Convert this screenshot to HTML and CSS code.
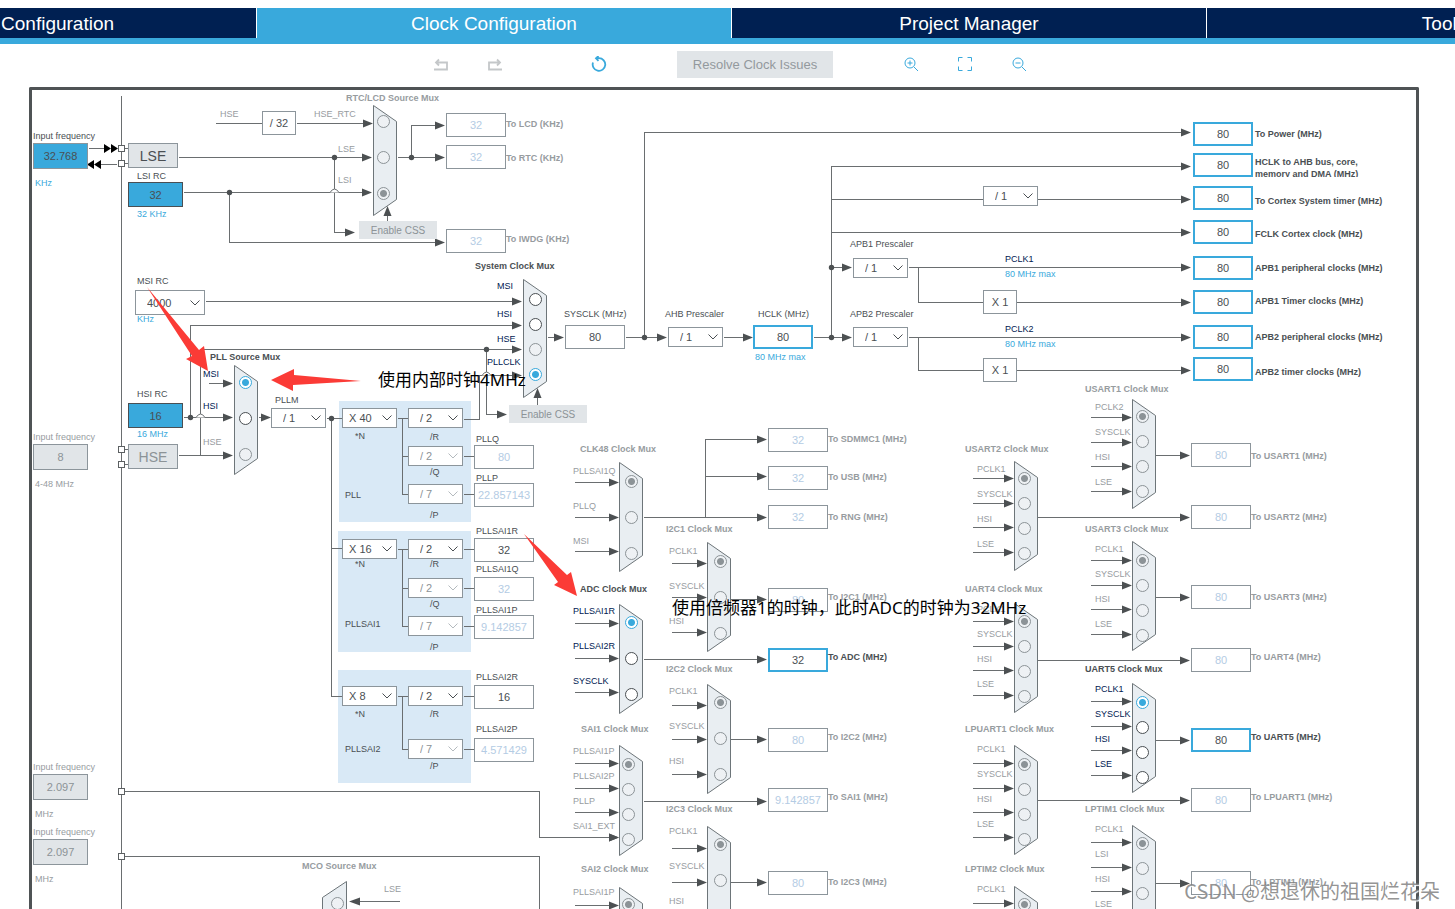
FILE: index.html
```html
<!DOCTYPE html>
<html lang="en">
<head>
  <meta charset="UTF-8">
  <meta name="viewport" content="width=device-width, initial-scale=1.0">
  <title>Clock Configuration</title>
  <link rel="stylesheet" href="styles.css">
</head>
<body>
  <nav class="tabs">
    <a href="#pinout" class="tab">Pinout &amp; Configuration</a>
    <a href="#clock" class="tab active">Clock Configuration</a>
    <a href="#project" class="tab">Project Manager</a>
    <a href="#tools" class="tab">Tools</a>
  </nav>

  <!-- Toolbar -->
  <div class="toolbar">
    <div class="group">
      <button class="icon off" aria-label="Undo">
        <svg viewBox="0 0 16 16"><path d="M1 13.500h13V6.500H3M6 3.500L3 6.500l3 3" stroke-width="1.8"/></svg>
      </button>
      <button class="icon off" aria-label="Redo">
        <svg viewBox="0 0 16 16"><path d="M15 13.500H2V6.500h11M10 3.500l3 3-3 3" stroke-width="1.8"/></svg>
      </button>
    </div>
    <button class="icon reset" aria-label="Reset">
      <svg viewBox="0 0 16 16"><path d="M2 6.500A6.300 6.300 0 1 0 8 2.200H5M7.500 0L5 2.200l2.500 2.600" stroke-width="1.8"/></svg>
    </button>
    <button class="resolve" disabled>Resolve Clock Issues</button>
    <div class="group">
      <button class="icon" aria-label="Zoom in">
        <svg viewBox="0 0 16 16"><circle cx="7" cy="7" r="5"/><path d="M11 11l4 4M4.500 7h5M7 4.500v5"/></svg>
      </button>
      <button class="icon" aria-label="Fit to window">
        <svg viewBox="0 0 16 16"><path d="M1.500 5.500v-4h4M10.500 1.500h4v4M14.500 10.500v4h-4M5.500 14.500h-4v-4"/></svg>
      </button>
      <button class="icon" aria-label="Zoom out">
        <svg viewBox="0 0 16 16"><circle cx="7" cy="7" r="5"/><path d="M11 11l4 4M4.500 7h5"/></svg>
      </button>
    </div>
  </div>

  <!-- Clock tree, filled by clock.js -->
  <main class="sheet">
    <div class="frame"></div>
    <svg class="wires"><g id="wires" transform="translate(0 -84)"></g></svg>
    <div id="nodes"></div>
    <svg class="marks">
      <g transform="translate(0 -84)">
        <path d="M147 287L199 350L204 346L208 371L186 359L192 356Z"/>
        <path d="M361 381L294 375L294 369L271 380L293 391L293 385Z"/>
        <path d="M524 534L567 575L571 572L577 596L554 585L558 582Z"/>
      </g>
    </svg>
    <p class="note note-pll">使用内部时钟4MHz</p>
    <p class="note note-adc">使用倍频器1的时钟，此时ADC的时钟为32MHz</p>
    <p class="watermark">CSDN @想退休的祖国烂花朵</p>
  </main>

  <script src="clock.js"></script>
</body>
</html>
```
FILE: styles.css
```css
* {
  box-sizing: border-box;
}
body {
  margin: 0;
  height: 100vh;
  display: flex;
  flex-direction: column;
  overflow: hidden;
  background: #fff;
  color: #4a4f53;
  font-family: "Liberation Sans", Arial, sans-serif;
}
button, input, select {
  font-family: inherit;
  margin: 0;
  padding: 0;
}

/* Tabs */
.tabs {
  display: flex;
  flex: none;
  gap: 1px;
  margin-top: 8px;
  overflow: hidden;
  border-bottom: 6px solid #39a9dc;
}
.tab {
  flex: 0 0 474px;
  height: 30px;
  line-height: 31px;
  text-align: center;
  font-size: 19px;
  color: #fff;
  background: #002052;
  text-decoration: none;
}
/* the first tab is scrolled half out of the window */
.tab:first-child {
  margin-left: -218px;
}
.tab.active {
  background: #39a9dc;
}

/* Toolbar */
.toolbar {
  display: flex;
  flex: none;
  justify-content: center;
  align-items: center;
  height: 40px;
  padding-left: 5px;
  gap: 70px;
}
.group {
  display: flex;
  gap: 38px;
}
.icon {
  width: 16px;
  height: 16px;
  border: none;
  background: none;
  color: #39a9dc;
}
.icon svg {
  display: block;
  width: 16px;
  height: 16px;
  fill: none;
  stroke: currentColor;
}
.icon.off {
  color: #c4c7c9;
}
.reset {
  margin-left: 18px;
}
.resolve {
  width: 156px;
  height: 27px;
  border: none;
  background: #e1e5e8;
  color: #93999d;
  font-size: 13px;
}

/* Clock tree */
.sheet {
  position: relative;
  flex: 1;
  overflow: hidden;
}
.frame {
  height: 100%;
  margin: 3px 36px 0 29px;
  border: 3px solid #4f5355;
  border-bottom: none;
  border-radius: 2px 2px 0 0;
}
.wires, .marks {
  position: absolute;
  left: 0;
  top: 0;
  width: 100%;
  height: 100%;
}
.wires .line {
  fill: none;
  stroke: #6a6e70;
  shape-rendering: crispEdges;
}
.wires .hop {
  fill: #fff;
  stroke: #6a6e70;
}
.wires .head, .wires .dot {
  fill: #4c5052;
}
.wires .ink {
  fill: #000;
}
.wires .body {
  fill: #e9eef2;
  stroke: #6d7579;
}
.wires .zone {
  fill: #d9e9f6;
}
.wires .pin {
  fill: #fff;
  stroke: #5c6062;
  shape-rendering: crispEdges;
}
.marks {
  pointer-events: none;
}
.marks path {
  fill: #fb3b36;
}

.node {
  position: absolute;
}
.label {
  font-size: 9px;
  line-height: 12px;
  white-space: nowrap;
}
.bold {
  font-weight: bold;
}
.off-text {
  color: #979c9f;
}
.blue {
  color: #39a9dc;
}
.navy {
  color: #002052;
}
.wrap {
  width: 130px;
  height: 21px;
  overflow: hidden;
  white-space: normal;
}

.value, .const, .osc {
  border: 1px solid #8c959b;
  border-radius: 0;
  background: #fff;
  color: #4a4f53;
  font-size: 11px;
  text-align: center;
}
.const, .osc {
  display: flex;
  align-items: center;
  justify-content: center;
}
.value.idle {
  color: #b4cce4;
}
.value.used {
  border: 2px solid #39a9dc;
}
.value.filled, .const.filled {
  background: #39a9dc;
}
.value.grey {
  background: #e1e5e8;
  color: #8c9397;
}
.osc {
  background: #e1e5e8;
  font-size: 14px;
}
.osc.grey {
  color: #8c9397;
}
.dark {
  border-color: #4a4f53;
}
.pick {
  appearance: none;
  border: 1px solid #8c959b;
  border-radius: 0;
  padding-left: 11px;
  color: #4a4f53;
  font-size: 11px;
  background: #fff url("data:image/svg+xml,%3Csvg xmlns='http://www.w3.org/2000/svg' width='10' height='6'%3E%3Cpath d='M.5 .5L5 5L9.500 .5' fill='none' stroke='%234a4f53'/%3E%3C/svg%3E") no-repeat right 4px center;
}
.pick.mult {
  padding-left: 6px;
}
.pick:disabled {
  opacity: 1;
  color: #8c9397;
  background-image: url("data:image/svg+xml,%3Csvg xmlns='http://www.w3.org/2000/svg' width='10' height='6'%3E%3Cpath d='M.5 .5L5 5L9.500 .5' fill='none' stroke='%23b4babe'/%3E%3C/svg%3E");
}
.css {
  border: none;
  background: #e1e5e8;
  color: #8c9397;
  font-size: 10px;
}
.radio {
  appearance: none;
  width: 13px;
  height: 13px;
  border: 1px solid #4a4f53;
  border-radius: 50%;
  background: #fff;
}
.radio:disabled {
  border-color: #8c9397;
  background: #eef1f4;
}
.radio:checked {
  border-color: #39a9dc;
  background: radial-gradient(circle, #39a9dc 3px, #fff 4px);
}
.radio:checked:disabled {
  border-color: #8c9397;
  background: radial-gradient(circle, #8c9397 3px, #eef1f4 4px);
}

/* Notes over the tree */
.note, .watermark {
  position: absolute;
  margin: 0;
  white-space: nowrap;
  font-family: "Noto Sans", "Noto Sans CJK SC", sans-serif;
}
.note {
  color: #000;
  font-size: 17px;
  line-height: 24px;
}
.note-pll {
  left: 378px;
  top: 284px;
}
.note-adc {
  left: 672px;
  top: 512px;
}
.watermark {
  right: 15px;
  bottom: 4px;
  font-family: "Noto Sans CJK SC", sans-serif;
  font-size: 20px;
  line-height: 28px;
  color: rgba(120, 120, 120, 0.8);
  text-shadow: 1px 1px 1px #fff;
}
```
FILE: clock.js
```js
// The sheet starts right below the tabs and the toolbar
const TOP = 84;
const SVG = 'http://www.w3.org/2000/svg';
const wires = document.getElementById('wires');
const nodes = document.getElementById('nodes');
let count = 0;

function shape(tag, cls, attrs) {
  const s = document.createElementNS(SVG, tag);
  s.setAttribute('class', cls);
  for (const k in attrs) s.setAttribute(k, attrs[k]);
  wires.appendChild(s);
}

function node(tag, cls, x, y, w, h) {
  const n = document.createElement(tag);
  n.className = 'node ' + cls;
  n.style.left = x + 'px';
  n.style.top = (y - TOP) + 'px';
  if (w) n.style.width = w + 'px';
  if (h) n.style.height = h + 'px';
  nodes.appendChild(n);
  return n;
}

// y is the middle of the text line
function label(text, x, y, cls, target) {
  const n = node(target ? 'label' : 'span', 'label ' + (cls || ''), x, y - 6);
  n.textContent = text;
  if (target) n.htmlFor = target.id;
  return n;
}

function value(text, x, y, cls, w, h) {
  const n = node('input', 'value ' + (cls || ''), x, y, w || 60, h || 24);
  n.type = 'text';
  n.value = text;
  n.readOnly = true;
  n.id = 'v' + (++count);
  return n;
}

function pick(text, x, y, cls, off, w, h) {
  const n = node('select', 'pick ' + (cls || ''), x, y, w || 55, h || 20);
  n.add(new Option(text));
  n.disabled = !!off;
  n.id = 'v' + (++count);
  return n;
}

function constant(text, x, y, w, h, cls) {
  node('div', cls || 'const', x, y, w, h).textContent = text;
}

// points: [x, y, x, y, ...]
function line(...p) {
  let d = '';
  for (let i = 0; i < p.length; i += 2) d += (i ? 'L' : 'M') + (p[i] + 0.5) + ' ' + (p[i + 1] + 0.5);
  shape('path', 'line', { d });
}

function head(x, y) {
  shape('path', 'head', { d: `M${x} ${y + 0.5}l-10 -4v8z` });
}

// a line that ends in an arrow head
function arrow(...p) {
  const y = p.pop();
  const x = p.pop();
  line(...p, x - 6, y);
  head(x, y);
}

function up(x, y, end) {
  line(x, y + 6, x, end);
  shape('path', 'head', { d: `M${x + 0.5} ${y}l-4 10h8z` });
}

function dot(x, y) {
  shape('circle', 'dot', { cx: x + 0.5, cy: y + 0.5, r: 2.7 });
}

function hop(x, y) {
  shape('path', 'hop', { d: `M${x - 4} ${y + 0.5}q4.500 -7 9 0` });
}

function pin(y) {
  shape('rect', 'pin', { x: 118.5, y: y - 2.5, width: 6, height: 6 });
}

function mux(m) {
  shape('path', 'body', { d: `M${m.x + 0.5} ${m.top + 0.5}l23 16V${m.bottom - 15.5}l-23 16z` });
  label(m.title, m.tx, m.ty, 'bold ' + (m.on ? '' : 'off-text'));
  m.names.forEach((name, i) => {
    const off = !m.on || (m.dead || []).includes(i);
    const r = node('input', 'radio', m.rx - 6, m.radios[i] - 6);
    r.type = 'radio';
    r.name = m.title;
    r.id = 'v' + (++count);
    r.disabled = off;
    r.checked = i === m.sel;
    const lx = Array.isArray(m.lx) ? m.lx[i] : m.lx;
    label(name, lx, m.labels[i], (off && !m.allNavy) ? 'off-text' : 'navy', r);
    if (m.from) arrow(m.from, m.arrows[i], m.x, m.arrows[i]);
  });
}

function output(text, name, x, y, ly, cls) {
  const v = value(text, x, y, cls);
  label(name, x + 60, ly, 'bold ' + (cls === 'idle' ? 'off-text' : ''), v);
}

// ---- PLL zones ----
shape('rect', 'zone', { x: 339, y: 401, width: 132, height: 121 });
shape('rect', 'zone', { x: 338, y: 531, width: 133, height: 121 });
shape('rect', 'zone', { x: 338, y: 670, width: 133, height: 113 });

// ---- Oscillators ----
line(121, 95, 121, 1000);
[[143, '32.768', 'filled', '', 'KHz', 'blue'],
 [444, '8', 'grey', 'off-text', '4-48 MHz', 'off-text'],
 [774, '2.097', 'grey', 'off-text', 'MHz', 'off-text'],
 [839, '2.097', 'grey', 'off-text', 'MHz', 'off-text']].forEach(([y, v, cls, lcls, unit, ucls]) => {
  const n = value(v, 33, y, cls, 55, 26);
  label('Input frequency', 33, y - 7, lcls, n);
  label(unit, 35, y + 40, ucls);
});

line(88, 148, 108, 148);
line(96, 164, 116, 164);
shape('path', 'ink', { d: 'M104 144l7 4.500v-4.500l7 4.500l-7 4.500v-4.500l-7 4.500zM101 160l-7 4.500v-4.500l-7 4.500l7 4.500v-4.500l7 4.500z' });
[148, 163, 449, 464].forEach(y => { line(121, y, 128, y); pin(y); });
pin(791);
pin(856);
constant('LSE', 128, 143, 50, 25, 'osc');
constant('HSE', 128, 444, 50, 25, 'osc grey');
label('LSI RC', 137, 176);
constant('32', 128, 182, 55, 25, 'const filled dark');
label('32 KHz', 137, 214, 'blue');
label('HSI RC', 137, 394);
constant('16', 128, 403, 55, 25, 'const filled dark');
label('16 MHz', 137, 434, 'blue');
const msi = pick('4000', 135, 290, '', false, 70, 25);
label('MSI RC', 137, 281, '', msi);
label('KHz', 137, 319, 'blue');

// ---- RTC/LCD ----
label('HSE', 220, 114, 'off-text');
line(215, 123, 262, 123);
arrow(296, 123, 373, 123);
constant('/ 32', 262, 111, 34, 24);
arrow(178, 157, 372, 157);
arrow(183, 192, 372, 192);
arrow(334, 157, 334, 232, 355, 232);
hop(334, 192);
arrow(229, 192, 229, 242, 445, 242);
dot(334, 157);
dot(229, 192);
mux({ title: 'RTC/LCD Source Mux', tx: 346, ty: 98, x: 373, top: 105, bottom: 215, rx: 383, sel: 2,
  names: ['HSE_RTC', 'LSE', 'LSI'], lx: [314, 338, 338], labels: [114, 149, 180], radios: [121, 157, 193] });
arrow(397, 157, 445, 157);
arrow(411, 157, 411, 125, 445, 125);
dot(411, 157);
up(387, 206, 221);
node('button', 'css', 359, 221, 78, 18).textContent = 'Enable CSS';
output('32', 'To LCD (KHz)', 446, 113, 124, 'idle');
output('32', 'To RTC (KHz)', 446, 145, 158, 'idle');
output('32', 'To IWDG (KHz)', 446, 229, 239, 'idle');

// ---- System clock ----
arrow(205, 301, 522, 301);
arrow(190, 417, 190, 325, 522, 325);
arrow(200, 455, 200, 349, 522, 349);
arrow(463, 419, 479, 419, 479, 375, 522, 375);
arrow(486, 349, 486, 414, 507, 414);
hop(486, 375);
dot(486, 349);
mux({ title: 'System Clock Mux', tx: 475, ty: 266, x: 523, top: 279, bottom: 397, rx: 535, sel: 3, on: true, dead: [2], allNavy: true,
  names: ['MSI', 'HSI', 'HSE', 'PLLCLK'], lx: [497, 497, 497, 487], labels: [286, 314, 339, 362], radios: [299, 324, 349, 374] });
up(537, 388, 405);
node('button', 'css', 509, 405, 78, 18).textContent = 'Enable CSS';
arrow(547, 337, 564, 337);
label('SYSCLK (MHz)', 564, 314, '', value('80', 565, 325));
arrow(625, 337, 667, 337);
arrow(644, 337, 644, 132, 1191, 132);
dot(644, 337);
label('AHB Prescaler', 665, 314, '', pick('/ 1', 668, 327));
arrow(723, 337, 753, 337);
label('HCLK (MHz)', 758, 314, '', value('80', 753, 325, 'used'));
label('80 MHz max', 755, 357, 'blue');
arrow(813, 337, 852, 337);
arrow(831, 337, 831, 166, 1191, 166);
arrow(831, 199, 1191, 199);
arrow(831, 232, 1191, 232);
arrow(831, 267, 852, 267);
dot(831, 337);
dot(831, 267);
pick('/ 1', 983, 186).ariaLabel = 'Cortex prescaler';
[['APB1 Prescaler', 'PCLK1', 267, 302], ['APB2 Prescaler', 'PCLK2', 337, 370]].forEach(([name, clk, y, y2], i) => {
  label(name, 850, 244 + i * 70, '', pick('/ 1', 853, 258 + i * 69));
  arrow(908, y, 1191, y);
  arrow(918, y, 918, y2, 1191, y2);
  label(clk, 1005, 259 + i * 70, 'navy');
  label('80 MHz max', 1005, 274 + i * 70, 'blue');
  constant('X 1', 983, y2 - 12, 34, 24);
});
[['To Power (MHz)', 122, 134], ['HCLK to AHB bus, core, memory and DMA (MHz)', 153, 162],
 ['To Cortex System timer (MHz)', 186, 201], ['FCLK Cortex clock (MHz)', 220, 234],
 ['APB1 peripheral clocks (MHz)', 256, 268], ['APB1 Timer clocks (MHz)', 290, 301],
 ['APB2 peripheral clocks (MHz)', 325, 337], ['APB2 timer clocks (MHz)', 357, 372]].forEach(([name, y, ly], i) => {
  label(name, 1255, ly, i === 1 ? 'bold wrap' : 'bold', value('80', 1193, y, 'used'));
});

// ---- PLL source ----
arrow(183, 417, 233, 417);
arrow(178, 455, 233, 455);
arrow(208, 383, 233, 383);
hop(200, 417);
dot(190, 417);
mux({ title: 'PLL Source Mux', tx: 210, ty: 357, x: 234, top: 365, bottom: 474, rx: 245, sel: 0, on: true, dead: [2],
  names: ['MSI', 'HSI', 'HSE'], lx: 203, labels: [374, 406, 442], radios: [382, 418, 454] });
arrow(258, 417, 271, 417);
label('PLLM', 275, 400, '', pick('/ 1', 271, 408));
line(326, 418, 342, 418);
line(331, 418, 331, 696, 342, 696);
line(331, 548, 342, 548);
dot(331, 418);

// ---- PLL, PLLSAI1, PLLSAI2 ----
// rows: [select y, divider, divider label, its y, value, value y, value name, its y, enabled]
[{ name: 'PLL', ny: 495, mult: 'X 40', y: 408, my: 436, rows: [
    [408, '/ 2', '/R', 437, null, 0, '', 0, true],
    [446, '/ 2', '/Q', 472, '80', 445, 'PLLQ', 439],
    [484, '/ 7', '/P', 515, '22.857143', 483, 'PLLP', 478]] },
 { name: 'PLLSAI1', ny: 624, mult: 'X 16', y: 539, my: 564, rows: [
    [539, '/ 2', '/R', 564, '32', 538, 'PLLSAI1R', 531, true],
    [578, '/ 2', '/Q', 604, '32', 577, 'PLLSAI1Q', 569],
    [616, '/ 7', '/P', 647, '9.142857', 615, 'PLLSAI1P', 610]] },
 { name: 'PLLSAI2', ny: 749, mult: 'X 8', y: 686, my: 714, rows: [
    [686, '/ 2', '/R', 714, '16', 685, 'PLLSAI2R', 677, true],
    [739, '/ 7', '/P', 766, '4.571429', 738, 'PLLSAI2P', 729]] }].forEach(pll => {
  label(pll.name, 345, pll.ny);
  label('*N', 355, pll.my, '', pick(pll.mult, 342, pll.y, 'mult'));
  const last = pll.rows[pll.rows.length - 1][0];
  line(397, pll.y + 10, 408, pll.y + 10);
  line(402, pll.y + 10, 402, last + 10);
  pll.rows.forEach(([y, div, dl, dy, v, vy, vn, vny, on]) => {
    label(dl, 430, dy, '', pick(div, 408, y, '', !on));
    line(402, y + 10, 408, y + 10);
    if (!v) return;
    line(463, y + 10, 474, y + 10);
    label(vn, 476, vny, '', value(v, 474, vy, on ? '' : 'idle'));
  });
});

// ---- External SAI / MCO ----
arrow(124, 791, 539, 791, 539, 837, 619, 837);
line(124, 856, 539, 856, 539, 1000);
label('MCO Source Mux', 302, 866, 'bold off-text');
shape('path', 'body', { d: 'M346.5 881.5l-24 16V980h24z' });
const mco = node('input', 'radio', 331, 897);
mco.type = 'radio';
mco.id = 'mco';
mco.disabled = true;
label('LSE', 384, 889, 'off-text', mco);
line(356, 901, 399, 901);
shape('path', 'head', { d: 'M349 901.500l11 -4v8z' });

// ---- CLK48, ADC, SAI ----
const four = ['PCLK1', 'SYSCLK', 'HSI', 'LSE'];
arrow(643, 517, 767, 517);
arrow(705, 517, 705, 439, 767, 439);
arrow(705, 476, 767, 476);
mux({ title: 'CLK48 Clock Mux', tx: 580, ty: 449, x: 619, top: 462, bottom: 571, rx: 631, sel: 0, from: 574,
  names: ['PLLSAI1Q', 'PLLQ', 'MSI'], lx: 573, labels: [471, 506, 541], radios: [481, 517, 553], arrows: [482, 517, 551] });
output('32', 'To SDMMC1 (MHz)', 768, 428, 439, 'idle');
output('32', 'To USB (MHz)', 768, 466, 477, 'idle');
output('32', 'To RNG (MHz)', 768, 505, 517, 'idle');

arrow(643, 659, 767, 659);
mux({ title: 'ADC Clock Mux', tx: 580, ty: 589, x: 619, top: 604, bottom: 713, rx: 631, sel: 0, from: 574, on: true,
  names: ['PLLSAI1R', 'PLLSAI2R', 'SYSCLK'], lx: 573, labels: [611, 646, 681], radios: [622, 658, 694], arrows: [623, 658, 692] });
output('32', 'To ADC (MHz)', 768, 648, 657, 'used');

arrow(643, 801, 767, 801);
mux({ title: 'SAI1 Clock Mux', tx: 581, ty: 729, x: 619, top: 745, bottom: 855, rx: 628, sel: 0, from: 574,
  names: ['PLLSAI1P', 'PLLSAI2P', 'PLLP', 'SAI1_EXT'], lx: 573, labels: [751, 776, 801, 826], radios: [764, 789, 814, 839], arrows: [763, 788, 812, 837] });
output('9.142857', 'To SAI1 (MHz)', 768, 788, 797, 'idle');
mux({ title: 'SAI2 Clock Mux', tx: 581, ty: 869, x: 619, top: 887, bottom: 997, rx: 628, sel: 0, from: 574,
  names: ['PLLSAI1P'], lx: 573, labels: [892], radios: [904], arrows: [905] });

// ---- I2C ----
[['I2C1', 529, 542, 561, 563, 588, 597], ['I2C2', 669, 684, 702, 705, 728, 737], ['I2C3', 809, 826, 844, 848, 871, 882]]
.forEach(([name, ty, top, r, a, oy, ly]) => {
  arrow(730, oy + 11, 767, oy + 11);
  mux({ title: name + ' Clock Mux', tx: 666, ty, x: 707, top, bottom: top + 109, rx: 720, sel: 0, from: 671,
    names: ['PCLK1', 'SYSCLK', 'HSI'], lx: 669, labels: [ty + 22, ty + 57, ty + 92], radios: [r, r + 36, r + 72], arrows: [a, a + 34, a + 69] });
  output('80', 'To ' + name + ' (MHz)', 768, oy, ly, 'idle');
});

// ---- UARTs and low power timers ----
// [name, title x, title y, mux top, first label, first radio, first arrow, output y, output label y]
[['USART1', 1085, 389, 399, 407, 416, 417, 443, 456],
 ['USART2', 965, 449, 461, 469, 478, 478, 505, 517],
 ['USART3', 1085, 529, 541, 549, 560, 560, 585, 597],
 ['UART4', 965, 589, 603, 609, 621, 621, 648, 657],
 ['UART5', 1085, 669, 683, 689, 702, 701, 728, 737],
 ['LPUART1', 965, 729, 745, 749, 764, 763, 788, 797],
 ['LPTIM1', 1085, 809, 825, 829, 843, 842, 871, 882],
 ['LPTIM2', 965, 869, 886, 889, 904, 903, 0, 0]].forEach(([name, tx, ty, top, l, r, a, oy, ly]) => {
  const left = tx === 965;
  const on = name === 'UART5';
  const x = left ? 1014 : 1132;
  let names = four;
  if (name === 'USART1') names = ['PCLK2', 'SYSCLK', 'HSI', 'LSE'];
  if (name === 'LPTIM1') names = ['PCLK1', 'LSI', 'HSI', 'LSE'];
  if (name === 'LPTIM2') names = ['PCLK1'];
  if (oy) arrow(x + 23, oy + 12, 1190, oy + 12);
  mux({ title: name + ' Clock Mux', tx, ty, x, top, bottom: top + 109, rx: left ? 1024 : 1142, sel: 0, on, from: left ? 972 : 1090,
    names, lx: left ? 977 : 1095, labels: [l, l + 25, l + 50, l + 75], radios: [r, r + 25, r + 50, r + 75], arrows: [a, a + 25, a + 49, a + 74] });
  if (oy) output('80', 'To ' + name + ' (MHz)', 1191, oy, ly, on ? 'used' : 'idle');
});
```
